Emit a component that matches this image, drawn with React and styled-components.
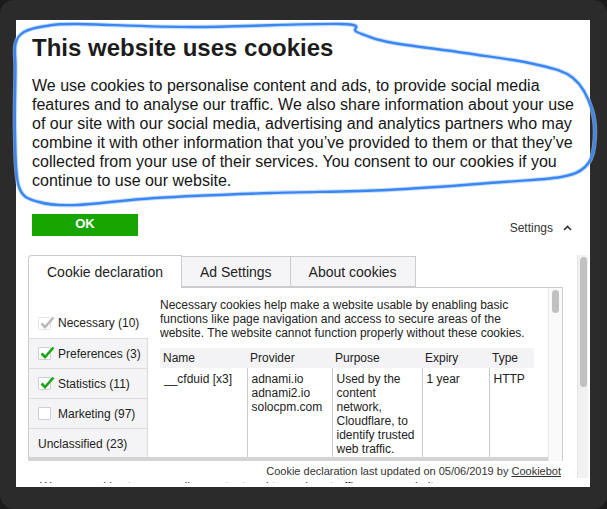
import React from "react";
import styled, { createGlobalStyle } from "styled-components";

const GlobalStyle = createGlobalStyle`
  html, body {
    margin: 0;
    padding: 0;
    background: #1b1b1b;
  }
  body {
    font-family: "Liberation Sans", Arial, sans-serif;
    color: #141414;
  }
`;

const Frame = styled.div`
  position: relative;
  width: 607px;
  height: 509px;
  box-sizing: border-box;
  padding: 20px 17px 22px 16px;
  background: #2b2b2b;
  border-radius: 14px;
`;

const Dialog = styled.div`
  height: 467px;
  box-sizing: border-box;
  padding: 14px 2px 4px 12px;
  background: #fff;
  overflow: hidden;
  display: flex;
  flex-direction: column;
`;

const Title = styled.h1`
  margin: 0;
  padding-left: 4px;
  font-size: 24px;
  line-height: 28px;
  font-weight: bold;
  color: #1c1c1c;
`;

const Intro = styled.p`
  margin: 14px 0 0;
  padding-left: 4px;
  width: 552px;
  font-size: 16px;
  line-height: 19px;
  color: #161616;
`;

const ActionRow = styled.div`
  margin-top: 24px;
  height: 22px;
  padding: 0 16px 0 4px;
  display: flex;
  align-items: center;
  justify-content: space-between;
`;

const OkButton = styled.button`
  width: 106px;
  height: 22px;
  border: none;
  padding: 0 0 3px;
  background: #19a500;
  color: #fff;
  font-family: inherit;
  font-size: 13px;
  font-weight: bold;
`;

const SettingsToggle = styled.div`
  display: flex;
  align-items: center;
  gap: 10px;
  padding-top: 6px;
  font-size: 12px;
  color: #333;
`;

const Details = styled.div`
  margin-top: 19px;
  height: 228px;
  display: flex;
  gap: 14px;
  overflow: hidden;
`;

const Main = styled.div`
  width: 535px;
  display: flex;
  flex-direction: column;
`;

const TabRow = styled.div`
  display: flex;
  align-items: flex-end;
  height: 32px;
`;

const Tab = styled.div`
  position: relative;
  z-index: ${(p) => (p.active ? 2 : 1)};
  box-sizing: border-box;
  height: ${(p) => (p.active ? "33px" : "31px")};
  margin-bottom: ${(p) => (p.active ? "-1px" : "0")};
  margin-left: ${(p) => (p.first ? "0" : "-1px")};
  padding: ${(p) => (p.active ? "0 18px 1px" : "0 18px")};
  display: flex;
  align-items: center;
  border: 1px solid #ccc;
  border-bottom: ${(p) => (p.active ? "none" : "1px solid #ccc")};
  border-radius: ${(p) => (p.first ? "4px 0 0 0" : "0")};
  background: ${(p) => (p.active ? "#fff" : "#f5f5f7")};
  font-size: 14px;
  color: #222;
`;

const Panel = styled.div`
  position: relative;
  height: 174px;
  box-sizing: border-box;
  border: 1px solid #ccc;
  border-bottom: none;
  display: flex;
`;

const PanelBody = styled.div`
  flex: 1;
  display: flex;
  border-bottom: 4px solid #d4d4d4;
  margin-left: -1px;
  overflow: hidden;
`;

const CategoryList = styled.div`
  width: 120px;
  padding-top: 20px;
  display: flex;
  flex-direction: column;
`;

const Category = styled.div`
  height: 30px;
  box-sizing: border-box;
  flex-shrink: 0;
  display: flex;
  align-items: center;
  gap: 7px;
  padding-left: 9px;
  border-top: ${(p) => (p.active ? "none" : "1px solid #dcdcdc")};
  border-left: 1px solid #ccc;
  border-right: ${(p) => (p.active ? "1px solid transparent" : "1px solid #dcdcdc")};
  background: ${(p) => (p.active ? "#fff" : "#f4f4f6")};
  font-size: 12px;
  color: #222;
`;

const Box = styled.span`
  position: relative;
  width: 13px;
  height: 13px;
  box-sizing: border-box;
  border: 1px solid ${(p) => (p.muted ? "#e6e6e6" : "#cfcfcf")};
  border-radius: 1px;
  background: #fff;
  flex-shrink: 0;
`;

const Tick = styled.svg`
  position: absolute;
  left: 0;
  top: -3px;
`;

const Body = styled.div`
  flex: 1;
  padding: 10px 0 0 12px;
  font-size: 12px;
  line-height: 14px;
  color: #222;
`;

const Description = styled.p`
  margin: 0 0 8px;
  width: 380px;
`;

const Table = styled.table`
  width: 374px;
  border-collapse: collapse;
  table-layout: fixed;
  font-size: 12px;
  line-height: 14px;
`;

const Th = styled.th`
  height: 20px;
  padding: 0 3px;
  text-align: left;
  font-weight: normal;
  color: #222;
  background: #f3f3f5;
`;

const Td = styled.td`
  height: 84px;
  padding: 4px 4px 1px;
  vertical-align: top;
  border-left: ${(p) => (p.first ? "none" : "1px solid #ccc")};
`;

const InnerScroll = styled.div`
  width: 14px;
  flex-shrink: 0;
  box-sizing: border-box;
  border-left: 1px solid #e6e6e6;
  background: #fafafa;
  padding: 2px 0 0 3px;
`;

const Thumb = styled.div`
  width: 7px;
  height: ${(p) => p.h}px;
  border-radius: 4px;
  background: #c1c1c1;
`;

const Footer = styled.div`
  margin-top: 3px;
  padding-right: 2px;
  text-align: right;
  font-size: 11px;
  line-height: 14px;
  color: #333;

  a {
    color: #333;
    text-decoration: underline;
  }
`;

const CutLine = styled.div`
  margin-top: 2px;
  padding-left: 12px;
  font-size: 12px;
  line-height: 14px;
  color: #333;
  white-space: nowrap;
`;

const OuterScroll = styled.div`
  width: 11px;
  height: 223px;
  box-sizing: border-box;
  background: #f1f1f1;
  border-left: 1px solid #e4e4e4;
  padding: 2px 0 0 2px;
`;

const Annotation = styled.svg`
  position: absolute;
  left: 0;
  top: 0;
  pointer-events: none;
`;

const loop = [
  [15.5, 44], [24, 32], [46, 26], [77, 24], [194, 27], [341, 24], [357, 32],
  [388, 42], [465, 53], [534, 64], [573, 78], [592, 110], [594, 147], [585, 167],
  [561, 177], [503, 182], [387, 190], [271, 193], [155, 198], [77, 205],
  [39, 202], [19, 187], [15, 133], [15.5, 70],
];

function smoothPath(pts) {
  const n = pts.length;
  const f = (v) => v.toFixed(1);
  let d = `M${f(pts[0][0])},${f(pts[0][1])}`;
  for (let i = 0; i < n; i++) {
    const p0 = pts[(i - 1 + n) % n];
    const p1 = pts[i];
    const p2 = pts[(i + 1) % n];
    const p3 = pts[(i + 2) % n];
    const c1 = [p1[0] + (p2[0] - p0[0]) / 6, p1[1] + (p2[1] - p0[1]) / 6];
    const c2 = [p2[0] - (p3[0] - p1[0]) / 6, p2[1] - (p3[1] - p1[1]) / 6];
    d += ` C${f(c1[0])},${f(c1[1])} ${f(c2[0])},${f(c2[1])} ${f(p2[0])},${f(p2[1])}`;
  }
  return d;
}

const Check = ({ color }) => (
  <Tick width="16" height="15" viewBox="0 0 16 15">
    <path d="M2.5 8.5 L6 12 L14.5 2.5" fill="none" stroke={color} strokeWidth="2.6" strokeLinecap="butt" />
  </Tick>
);

const categories = [
  { label: "Necessary (10)", state: "locked", active: true },
  { label: "Preferences (3)", state: "on" },
  { label: "Statistics (11)", state: "on" },
  { label: "Marketing (97)", state: "off" },
  { label: "Unclassified (23)", state: "none" },
];

export default function App() {
  return (
    <>
      <GlobalStyle />
      <Frame>
        <Dialog>
          <Title>This website uses cookies</Title>
          <Intro>
            We use cookies to personalise content and ads, to provide social media
            features and to analyse our traffic. We also share information about your use
            of our site with our social media, advertising and analytics partners who may
            combine it with other information that you’ve provided to them or that they’ve
            collected from your use of their services. You consent to our cookies if you
            continue to use our website.
          </Intro>
          <ActionRow>
            <OkButton>OK</OkButton>
            <SettingsToggle>
              Settings
              <svg width="9" height="6" viewBox="0 0 9 6">
                <path d="M1 5 L4.5 1.5 L8 5" fill="none" stroke="#333" strokeWidth="1.6" />
              </svg>
            </SettingsToggle>
          </ActionRow>
          <Details>
            <Main>
              <TabRow>
                <Tab first active>Cookie declaration</Tab>
                <Tab>Ad Settings</Tab>
                <Tab>About cookies</Tab>
              </TabRow>
              <Panel>
                <PanelBody>
                  <CategoryList>
                    {categories.map((c) => (
                      <Category key={c.label} active={c.active}>
                        {c.state !== "none" && (
                          <Box muted={c.state === "locked"}>
                            {c.state === "locked" && <Check color="#b9b9b9" />}
                            {c.state === "on" && <Check color="#17a617" />}
                          </Box>
                        )}
                        {c.label}
                      </Category>
                    ))}
                  </CategoryList>
                  <Body>
                    <Description>
                      Necessary cookies help make a website usable by enabling basic
                      functions like page navigation and access to secure areas of the
                      website. The website cannot function properly without these cookies.
                    </Description>
                    <Table>
                      <colgroup>
                        <col style={{ width: 87 }} />
                        <col style={{ width: 85 }} />
                        <col style={{ width: 90 }} />
                        <col style={{ width: 67 }} />
                        <col style={{ width: 45 }} />
                      </colgroup>
                      <thead>
                        <tr>
                          <Th>Name</Th>
                          <Th>Provider</Th>
                          <Th>Purpose</Th>
                          <Th>Expiry</Th>
                          <Th>Type</Th>
                        </tr>
                      </thead>
                      <tbody>
                        <tr>
                          <Td first>__cfduid [x3]</Td>
                          <Td>
                            adnami.io<br />adnami2.io<br />solocpm.com
                          </Td>
                          <Td>
                            Used by the<br />content<br />network,<br />Cloudflare, to<br />
                            identify trusted<br />web traffic.
                          </Td>
                          <Td>1 year</Td>
                          <Td>HTTP</Td>
                        </tr>
                      </tbody>
                    </Table>
                  </Body>
                </PanelBody>
                <InnerScroll>
                  <Thumb h={23} />
                </InnerScroll>
              </Panel>
              <Footer>
                Cookie declaration last updated on 05/06/2019 by <a href="#">Cookiebot</a>
              </Footer>
              <CutLine>
                We use cookies to personalise content and to analyse traffic on our website.
              </CutLine>
            </Main>
            <OuterScroll>
              <Thumb h={130} />
            </OuterScroll>
          </Details>
        </Dialog>
        <Annotation width="607" height="509" viewBox="0 0 607 509">
          <path d={smoothPath(loop)} fill="none" stroke="#a9cbfb" strokeWidth="4.5" strokeLinejoin="round" opacity="0.6" />
          <path d={smoothPath(loop)} fill="none" stroke="#3a86f2" strokeWidth="2.4" strokeLinejoin="round" />
        </Annotation>
      </Frame>
    </>
  );
}
